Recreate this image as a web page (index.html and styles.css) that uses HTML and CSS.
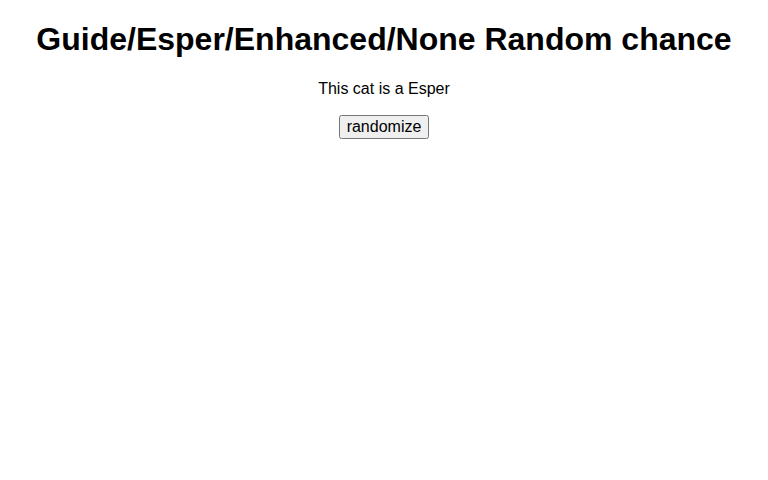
FILE: index.html
```html
<!DOCTYPE html>
<html lang="en">

<head>
    <meta charset="UTF-8">
    <meta name="viewport" content="width=device-width, initial-scale=1.0">
    <title>Random chance</title>
    <link rel="stylesheet" href="styles.css">
</head>

<body>
    <h1 class="title">Guide/Esper/Enhanced/None Random chance</h1>
    <p class="result" id="result">This cat is a Esper</p>
    <p class="actions">
        <button class="btn" onclick="randomize()">randomize</button>
    </p>
    <script>
        var kinds = ['Guide', 'Esper', 'Enhanced', 'None'];
        function randomize() {
            var pick = kinds[Math.floor(Math.random() * kinds.length)];
            document.getElementById('result').textContent = 'This cat is a ' + pick;
        }
    </script>
</body>

</html>
```

FILE: styles.css
```css
body {
    font-family: "Liberation Sans", Arial, sans-serif;
    text-align: center;
    color: #000;
    background: #fff;
}

.title {
    font-size: 32px;
    margin: 13px 0 21.5px;
}

.result,
.actions {
    margin: 17px 0;
}

.btn {
    font-family: "Liberation Sans", Arial, sans-serif;
    font-size: 16px;
}
```
